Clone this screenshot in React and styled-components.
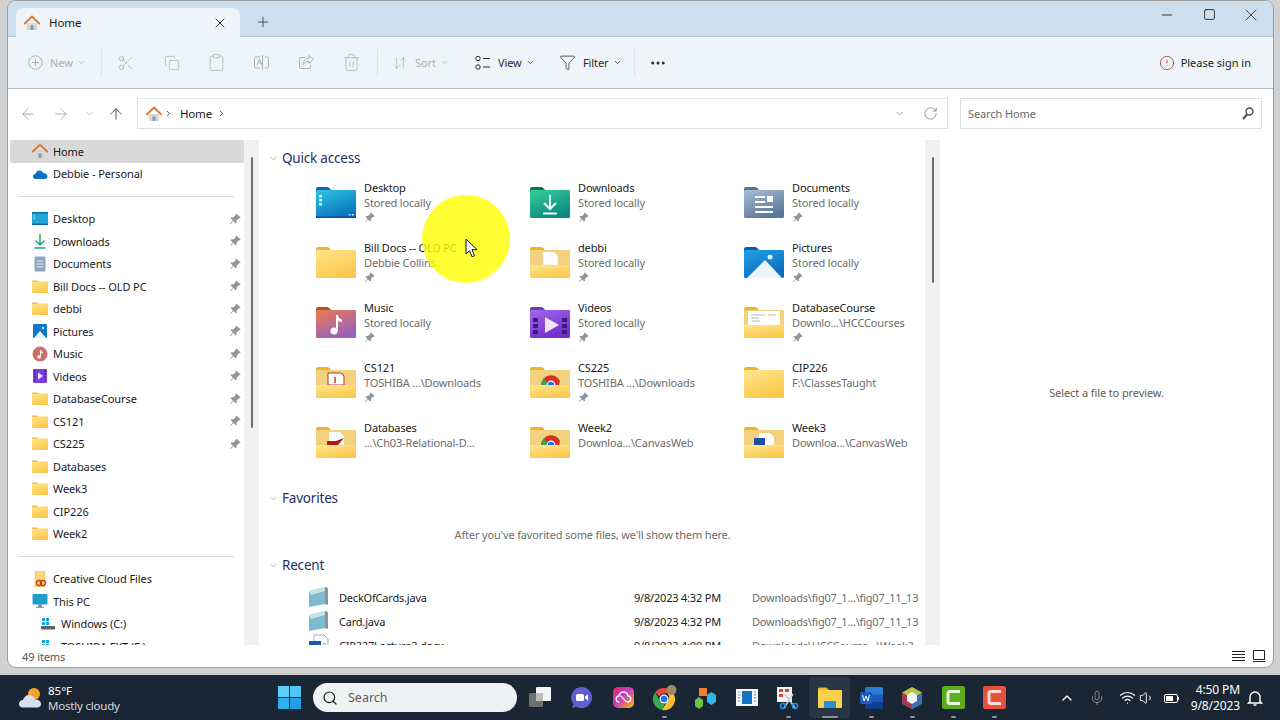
import React, { useId } from 'react';
import styled, { createGlobalStyle } from 'styled-components';
import {
  ArrowDownUp, ArrowLeft, ArrowRight, ArrowUp, ChevronDown, ChevronRight, ChevronUp, CircleAlert, Clipboard,
  Copy, Funnel, Mic, Minus, MoreHorizontal, Plus, RotateCw, Scissors, Search, Square, Trash2,
  Volume1, Wifi, X,
} from 'lucide-react';
import { BsPinAngleFill } from 'react-icons/bs';

const GlobalStyle = createGlobalStyle`
  html, body { margin: 0; padding: 0; width: 1280px; height: 720px; overflow: hidden; }
  body { font-family: "Noto Sans", "Open Sans", sans-serif; background: #d4d5d6; }
  * { box-sizing: border-box; }
`;

const Desktop = styled.div`
  position: relative;
  width: 1280px;
  height: 720px;
  display: flex;
  flex-direction: column;
  overflow: hidden;
`;
const WindowArea = styled.div`
  height: 675px;
  padding: 1px 7px 8px 8px;
  background: #d0d1d2;
`;
const Win = styled.div`
  height: 666px;
  display: flex;
  flex-direction: column;
  background: #fff;
  border-radius: 8px;
  overflow: hidden;
  box-shadow: 0 0 0 1px #9a9da0;
`;
const TitleBar = styled.div`
  height: 36px;
  flex: none;
  display: flex;
  align-items: flex-end;
  padding-left: 8px;
  background: #cddeed;
  border-bottom: 1px solid #b9c9d8;
`;
const Tab = styled.div`
  width: 224px;
  height: 29px;
  margin-bottom: -1px;
  display: flex;
  align-items: center;
  padding: 0 12px 0 8px;
  background: #eff4f9;
  border-radius: 8px 8px 0 0;
  font-size: 11.5px;
  letter-spacing: -0.1px;
  color: #1a1a1a;
  span { margin-left: 9px; flex: 1; }
`;
const NewTab = styled.div`
  width: 46px;
  height: 28px;
  display: flex;
  align-items: center;
  justify-content: center;
  color: #333;
`;
const Caption = styled.div`
  margin-left: auto;
  margin-right: 1px;
  align-self: flex-start;
  display: flex;
`;
const CaptionBtn = styled.div`
  width: 42px;
  height: 27px;
  display: flex;
  align-items: center;
  justify-content: center;
  color: #222;
`;
const Toolbar = styled.div`
  height: 52px;
  flex: none;
  display: flex;
  align-items: center;
  padding-left: 10px;
  background: #eff4f9;
  border-bottom: 1px solid #b7bec5;
`;
const ToolItem = styled.div`
  width: ${p => p.$w}px;
  padding-left: ${p => p.$pl || 0}px;
  height: 32px;
  flex: none;
  display: flex;
  align-items: center;
  justify-content: ${p => p.$center ? 'center' : 'flex-start'};
  color: ${p => p.$off ? '#a9afb5' : '#2a2a2a'};
  font-size: 11px;
  letter-spacing: -0.1px;
  span { margin: 0 4px 0 7px; }
`;
const ToolDivider = styled.div`
  width: 1px;
  height: 28px;
  flex: none;
  background: #dfe4e9;
`;
const SignIn = styled.div`
  margin-left: auto;
  margin-right: 22px;
  display: flex;
  align-items: center;
  gap: 6px;
  font-size: 11px;
  color: #222;
`;
const AddressRow = styled.div`
  height: 51px;
  flex: none;
  display: flex;
  align-items: flex-start;
  padding: 9px 11px 0 0;
`;
const NavBtns = styled.div`
  width: 129px;
  height: 31px;
  flex: none;
  display: flex;
  align-items: center;
`;
const NavBtn = styled.div`
  width: ${p => p.$w}px;
  display: flex;
  justify-content: center;
  color: ${p => p.$off ? '#8e949a' : '#333'};
`;
const AddressBox = styled.div`
  width: 811px;
  height: 31px;
  display: flex;
  align-items: center;
  padding: 0 9px 0 8px;
  border: 1px solid #dcdedf;
  border-top-color: #e4e5e6;
  font-size: 11.5px;
  color: #1a1a1a;
  span { margin: 0 5px 0 7px; letter-spacing: -0.2px; }
  > svg:nth-of-type(2) { margin-left: 2px; }
`;
const AddressEnd = styled.div`
  margin-left: auto;
  display: flex;
  align-items: center;
  gap: 18px;
  color: #666;
`;
const SearchBox = styled.div`
  width: 302px;
  height: 31px;
  margin-left: 12px;
  display: flex;
  align-items: center;
  justify-content: space-between;
  padding: 0 7px;
  border: 1px solid #dcdedf;
  font-size: 11px;
  letter-spacing: -0.1px;
  color: #6a6a6a;
`;
const Body = styled.div`
  flex: 1;
  min-height: 0;
  display: flex;
`;
const Sidebar = styled.div`
  width: 236px;
  flex: none;
  overflow: hidden;
`;
const NavRow = styled.div`
  height: 22.5px;
  margin-left: 2px;
  display: flex;
  align-items: center;
  padding-left: ${p => p.$indent ? 30 : 22}px;
  padding-right: 3px;
  border-radius: 2px;
  background: ${p => p.$active ? '#d9d9d9' : 'transparent'};
  font-size: 11px;
  letter-spacing: -0.1px;
  color: #1a1a1a;
  white-space: nowrap;
  span { margin-left: 5px; flex: 1; }
  > svg { color: #8f959b; }
`;
const IconSlot = styled.div`
  width: 16px;
  height: 16px;
  flex: none;
  display: flex;
  align-items: center;
  justify-content: center;
`;
const NavDivider = styled.div`
  height: 22.5px;
  margin: 0 9px 0 10px;
  display: flex;
  align-items: center;
  &::after { content: ""; width: 100%; height: 1px; background: #d8d8d8; }
`;
const Track = styled.div`
  width: ${p => p.$w}px;
  flex: none;
  display: flex;
  justify-content: center;
  padding-top: 17px;
  background: #f1f1f1;
  &::after {
    content: "";
    width: 2px;
    height: ${p => p.$thumb}px;
    background: #6e6e6e;
    border-radius: 1px;
  }
`;
const Content = styled.div`
  width: ${p => p.$w}px;
  flex: none;
  padding: 8px 8px 0 8px;
  overflow: hidden;
  margin-left: 1px;
`;
const SectionHead = styled.div`
  height: 20px;
  display: flex;
  align-items: center;
  gap: 3px;
  font-size: 13.5px;
  letter-spacing: -0.2px;
  color: #1d2f66;
  svg { color: #777; }
`;
const TileGrid = styled.div`
  display: grid;
  grid-template-columns: repeat(3, 214px);
  grid-auto-rows: 60px;
  margin: 10px 0 10px 48px;
`;
const Tile = styled.div`
  display: flex;
  gap: 8px;
  padding-top: 2px;
`;
const TileIcon = styled.div`
  width: 40px;
  padding-top: 6px;
  flex: none;
`;
const TileText = styled.div`
  font-size: 11px;
  line-height: 15px;
  letter-spacing: -0.15px;
  white-space: nowrap;
  color: #1a1a1a;
  small { display: block; font-size: 11px; color: #6c6c6c; }
  svg { color: #8f959b; display: block; margin-top: 2px; }
`;
const EmptyNote = styled.div`
  height: 47px;
  display: flex;
  align-items: center;
  justify-content: center;
  padding-top: 5px;
  font-size: 11px;
  letter-spacing: -0.15px;
  color: #6c6c6c;
`;
const RecentList = styled.div`
  margin-top: 10px;
`;
const RecentRow = styled.div`
  height: 24px;
  display: flex;
  align-items: center;
  padding-left: 40px;
  font-size: 11px;
  letter-spacing: -0.2px;
  color: #1a1a1a;
  white-space: nowrap;
  svg { flex: none; }
`;
const RecentName = styled.div`
  width: 295px;
  flex: none;
  margin-left: 9px;
`;
const RecentDate = styled.div`
  width: 118px;
  flex: none;
`;
const RecentPath = styled.div`
  color: #6c6c6c;
`;
const Preview = styled.div`
  flex: 1;
  display: flex;
  align-items: center;
  justify-content: center;
  font-size: 11px;
  letter-spacing: -0.1px;
  color: #5c5c5c;
`;
const StatusBar = styled.div`
  height: 22px;
  flex: none;
  display: flex;
  align-items: center;
  justify-content: space-between;
  padding: 0 8px 0 14px;
  font-size: 11px;
  letter-spacing: -0.1px;
  color: #555;
`;
const ViewToggles = styled.div`
  display: flex;
  gap: 8px;
  color: #222;
`;
const Taskbar = styled.div`
  height: 45px;
  flex: none;
  display: flex;
  align-items: center;
  background: #1a2634;
  color: #fff;
`;
const Weather = styled.div`
  width: 268px;
  flex: none;
  display: flex;
  align-items: center;
  gap: 6px;
  padding-left: 18px;
  font-size: 11.5px;
  line-height: 15px;
  small { display: block; font-size: 11.5px; color: #d5dade; letter-spacing: -0.2px; }
`;
const StartBtn = styled.div`
  width: 45px;
  flex: none;
  padding-left: 10px;
  display: flex;
`;
const SearchPill = styled.div`
  width: 204px;
  height: 29px;
  flex: none;
  display: flex;
  align-items: center;
  gap: 10px;
  padding-left: 9px;
  border-radius: 15px;
  background: #eef2f2;
  color: #5e5e5e;
  font-size: 12.500px;
  svg { color: #1a1a1a; }
`;
const Apps = styled.div`
  margin-left: 3px;
  display: flex;
`;
const AppSlot = styled.div`
  position: relative;
  width: 41.3px;
  height: 41px;
  display: flex;
  align-items: center;
  justify-content: center;
  border-radius: 4px;
  background: ${p => p.$active ? '#2a3644' : 'transparent'};
  &::after {
    content: "";
    display: ${p => p.$running ? 'block' : 'none'};
    position: absolute;
    bottom: 0;
    left: 50%;
    width: ${p => p.$active ? 16 : 5}px;
    height: 2px;
    margin-left: ${p => p.$active ? -8 : -2.5}px;
    border-radius: 1px;
    background: #8b949e;
  }
`;
const Tray = styled.div`
  margin-left: auto;
  display: flex;
  align-items: center;
  padding-right: 16px;
`;
const TraySlot = styled.div`
  width: ${p => p.$w}px;
  display: flex;
  justify-content: center;
  color: ${p => p.$dim ? '#8f969d' : '#fff'};
`;
const Clock = styled.div`
  width: 53px;
  margin: 0 6px 0 0;
  text-align: right;
  font-size: 12px;
  line-height: 15.5px;
  letter-spacing: -0.1px;
  white-space: nowrap;
`;
const Highlight = styled.div`
  position: absolute;
  left: 422px;
  top: 195px;
  width: 88px;
  height: 88px;
  border-radius: 50%;
  background: rgba(255, 255, 0, 0.8);
  filter: blur(0.5px);
`;
const Pointer = styled.svg`
  position: absolute;
  left: 465px;
  top: 238px;
`;

const folderColors = {
  desktop: ['#0f67b5', '#2ec6e0', '#0a76c0'],
  downloads: ['#0a7458', '#35cf9c', '#0f8a80'],
  documents: ['#5f7389', '#a6bcd6', '#5d7998'],
  pictures: ['#0a5cad', '#20a0e4', '#0f6cc0'],
  music: ['#b4560f', '#ea7a4c', '#9b62bb'],
  videos: ['#6b3eb6', '#a565ea', '#7231c9'],
  yellow: ['#eeb32a', '#ffe68f', '#fbc84c'],
};

function Thumb({ kind }) {
  if (kind === 'doc') return <path d="M13 6h11l4 4v9H13z" fill="#fff" stroke="#ddd" strokeWidth=".5" />;
  if (kind === 'pdf') return (
    <g>
      <path d="M12 7h12a4 4 0 0 1 4 4v8H12z" fill="#fff" stroke="#b33" strokeWidth="1" />
      <path d="M19 11v6" stroke="#c33" strokeWidth="1.5" />
    </g>
  );
  if (kind === 'db') return (
    <g>
      <path d="M13 6h11l4 4v9H13z" fill="#fff" />
      <path d="M11 15h9l8-3-6 7H11z" fill="#a81d1d" />
    </g>
  );
  if (kind === 'chrome') return (
    <g>
      <path d="M11 19a10 10 0 0 1 19-4l-1 4z" fill="#d93025" />
      <path d="M11 19a10 10 0 0 1 3-7l4 7z" fill="#34a853" />
      <circle cx="21" cy="19" r="4.4" fill="#fff" />
      <circle cx="21" cy="19" r="3.2" fill="#1a73e8" />
    </g>
  );
  if (kind === 'word') return (
    <g>
      <path d="M15 7h11l4 4v8H15z" fill="#fff" />
      <rect x="10" y="12" width="11" height="7" fill="#1b4ea8" />
    </g>
  );
  if (kind === 'note') return (
    <g>
      <rect x="4" y="5" width="32" height="14" fill="#fff" />
      <path d="M7 9h14M7 12h8M24 9h8M8 15h8" stroke="#b8b8b8" />
    </g>
  );
  return null;
}

function Folder({ kind = 'yellow', thumb, w = 40, h = 32 }) {
  const id = useId();
  const [tab, top, bottom] = folderColors[kind];
  return (
    <svg width={w} height={h} viewBox="0 0 40 32">
      <defs>
        <linearGradient id={id} x1="0" y1="0" x2="0.5" y2="1">
          <stop offset="0" stopColor={top} />
          <stop offset="1" stopColor={bottom} />
        </linearGradient>
      </defs>
      <path d="M0 3a2 2 0 0 1 2-2h9c1.5 0 2.500 1 4 3h23a2 2 0 0 1 2 2v8H0z" fill={tab} />
      {thumb ? (
        <g>
          <rect x="0" y="4" width="40" height="28" rx="1.500" fill="#f2d27f" />
          <Thumb kind={thumb} />
          <path d="M0 19h40v11.500a1.500 1.500 0 0 1-1.500 1.500h-37a1.500 1.500 0 0 1-1.500-1.500z" fill={`url(#${id})`} />
        </g>
      ) : (
        <rect x="0" y="4" width="40" height="28" rx="1.500" fill={`url(#${id})`} />
      )}
      {kind === 'desktop' && (
        <g fill="#d6f1fa">
          <rect x="3" y="9" width="3" height="2.500" />
          <rect x="3" y="13" width="3" height="2.500" />
          <rect x="3" y="17" width="3" height="2.500" />
          <rect x="33" y="28" width="1.500" height="1.500" />
          <rect x="36" y="28" width="1.500" height="1.500" />
          <rect x="0" y="30.500" width="40" height="1.500" fill="#0a4f94" />
        </g>
      )}
      {kind === 'downloads' && (
        <g stroke="#e6fff6" strokeWidth="2" fill="none">
          <path d="M20 9v14M14 17l6 6 6-6" />
          <path d="M13 27.500h14" />
        </g>
      )}
      {kind === 'documents' && (
        <g fill="#fff">
          <rect x="11" y="10" width="10" height="2" />
          <rect x="11" y="15" width="10" height="2" />
          <rect x="23" y="10" width="6" height="6" />
          <rect x="11" y="20" width="18" height="2" />
          <rect x="11" y="25" width="18" height="2" />
        </g>
      )}
      {kind === 'pictures' && (
        <g>
          <circle cx="26" cy="11" r="2.500" fill="#d5f1fb" />
          <path d="M3 32 21 14 38 32z" fill="#eaf6fb" />
        </g>
      )}
      {kind === 'music' && (
        <g fill="#fff">
          <circle cx="18" cy="25" r="3.500" />
          <path d="M20 25V9h2c.5 3 2 4 4 4.500V16c-1.500 0-3-.5-4-1.500V25z" />
        </g>
      )}
      {kind === 'videos' && (
        <g>
          <path d="M15 11l14 8-14 8z" fill="#eee6fb" />
          <g fill="#3b1a82">
            <rect x="3" y="12" width="5" height="4" />
            <rect x="3" y="18" width="5" height="4" />
            <rect x="3" y="24" width="5" height="4" />
            <rect x="32" y="12" width="5" height="4" />
            <rect x="32" y="18" width="5" height="4" />
            <rect x="32" y="24" width="5" height="4" />
          </g>
        </g>
      )}
    </svg>
  );
}

function HomeIcon({ size = 16 }) {
  return (
    <svg width={size} height={size} viewBox="0 0 16 16">
      <path d="M3 8h10v7H3z" fill="#d6d9db" />
      <rect x="6.500" y="10.500" width="3" height="4.500" fill="#94979a" />
      <path d="M.8 8.500 8 1.500l7.200 7" fill="none" stroke="#d9772b" strokeWidth="1.800" strokeLinecap="round" />
    </svg>
  );
}

function RenameIcon() {
  return (
    <svg width="17" height="17" viewBox="0 0 17 17" fill="none" stroke="currentColor">
      <path d="M7 3H3a1.500 1.500 0 0 0-1.500 1.500v8A1.500 1.500 0 0 0 3 14h4M12 3h2a1.500 1.500 0 0 1 1.500 1.500v8A1.500 1.500 0 0 1 14 14h-2M9.500 1v15" />
      <path d="M4 11l2.500-6L9 11M5 9h3" />
    </svg>
  );
}

function ShareIcon() {
  return (
    <svg width="17" height="17" viewBox="0 0 17 17" fill="none" stroke="currentColor">
      <path d="M7 3.500H3A1.500 1.500 0 0 0 1.500 5v8A1.500 1.500 0 0 0 3 14.500h8a1.500 1.500 0 0 0 1.500-1.500v-2" />
      <path d="M11 1.500l4.500 4-4.500 4V7.300C8 7.300 6 8.500 5 11c0-4 2.500-6.500 6-6.800z" />
    </svg>
  );
}

function ViewIcon() {
  return (
    <svg width="16" height="16" viewBox="0 0 16 16" fill="none" stroke="currentColor">
      <circle cx="3" cy="3.500" r="2.200" />
      <circle cx="3" cy="12" r="2.200" />
      <path d="M8 3.500h7M8 12h7" />
    </svg>
  );
}

function SearchHandle() {
  return (
    <svg width="12" height="13" viewBox="0 0 12 13" fill="none" stroke="#4a4a4a" strokeWidth="1.400">
      <circle cx="7.500" cy="4.500" r="3.500" />
      <path d="M5 7.500 1 12" strokeWidth="1.900" />
    </svg>
  );
}

function DesktopGlyph() {
  return (
    <svg width="16" height="13" viewBox="0 0 16 13">
      <rect width="16" height="13" rx="1" fill="#1fa8d8" />
      <rect width="16" height="1.600" rx=".6" fill="#0f6ab4" />
      <rect y="11.600" width="16" height="1.400" fill="#0c5ea8" />
      <path d="M1.500 4h1.500M1.500 6.500h1.500" stroke="#d6f1fa" />
    </svg>
  );
}

function PicturesGlyph() {
  return (
    <svg width="14" height="14" viewBox="0 0 14 14">
      <rect width="14" height="14" rx="1" fill="#0f78cc" />
      <circle cx="10" cy="4" r="1.200" fill="#d5f1fb" />
      <path d="M1 14 7 7l6 7z" fill="#f1f8fb" />
    </svg>
  );
}

function VideosGlyph() {
  return (
    <svg width="14" height="14" viewBox="0 0 14 14">
      <rect width="14" height="14" rx="1" fill="#7a3be0" />
      <path d="M5 3.500l5 3.500-5 3.500z" fill="#f0e8ff" />
      <path d="M1 2h1.500M1 5h1.500M1 8h1.500M1 11h1.500M11.500 2H13M11.500 5H13M11.500 8H13M11.500 11H13" stroke="#2f1472" strokeWidth="1.200" />
    </svg>
  );
}

function DownloadGlyph() {
  return (
    <svg width="16" height="16" viewBox="0 0 16 16" fill="none" stroke="#18a57e" strokeWidth="1.500">
      <path d="M8 1v10.500M3.500 7.500 8 12l4.500-4.500M2.500 15h11" />
    </svg>
  );
}

function DocGlyph() {
  return (
    <svg width="16" height="16" viewBox="0 0 16 16">
      <rect x="2.500" y="0.500" width="11" height="15" rx="1" fill="#8da4bf" />
      <path d="M4.500 5h7M4.500 8h7M4.500 11h7" stroke="#e8eef5" strokeWidth="1.200" />
    </svg>
  );
}

function MusicGlyph() {
  return (
    <svg width="16" height="16" viewBox="0 0 16 16">
      <circle cx="8" cy="8" r="7.500" fill="#cf6d68" />
      <circle cx="7" cy="11" r="1.700" fill="#fff" />
      <path d="M8 11V4h1c.3 1 1 1.700 2 2v1.300C10 7 9.500 6.800 9 6.400V11z" fill="#fff" />
    </svg>
  );
}

function CloudGlyph() {
  return (
    <svg width="16" height="16" viewBox="0 0 16 16">
      <path d="M1 10.500C1 9 2 8 3.500 8 4 5.500 6 4.500 7.500 4.500c2 0 3 1 3.700 2.500 2.500 0 4.300 1.300 4.300 3.300 0 1.500-1 2.700-2.500 2.700H3C2 13 1 12 1 10.500z" fill="#0f6fc4" />
    </svg>
  );
}

function CcFileGlyph() {
  return (
    <svg width="16" height="16" viewBox="0 0 16 16">
      <path d="M3 0h10v16H3z" fill="#f8d878" stroke="#e0b84c" strokeWidth=".5" />
      <circle cx="7" cy="12" r="2.500" fill="none" stroke="#d8381c" strokeWidth="1.300" />
      <circle cx="11" cy="12" r="2.500" fill="none" stroke="#d8381c" strokeWidth="1.300" />
    </svg>
  );
}

function PcGlyph() {
  return (
    <svg width="16" height="16" viewBox="0 0 16 16">
      <rect x="0.500" y="1" width="15" height="10.500" rx="1" fill="#1f9ec9" />
      <path d="M6 11.500h4V14H6z" fill="#7d98a8" />
      <path d="M4 14.500h8" stroke="#7d98a8" />
    </svg>
  );
}

function DriveGlyph() {
  return (
    <svg width="16" height="16" viewBox="0 0 16 16">
      <rect x="2" y="2" width="3" height="3" fill="#1aa0d8" />
      <rect x="6" y="2" width="3" height="3" fill="#1aa0d8" />
      <rect x="2" y="6" width="3" height="3" fill="#1aa0d8" />
      <rect x="6" y="6" width="3" height="3" fill="#1aa0d8" />
      <rect x="1" y="10" width="14" height="3.500" fill="#5e6468" />
    </svg>
  );
}

function JavaFile() {
  return (
    <svg width="22" height="22" viewBox="0 0 22 22">
      <path d="M1 5 17 1v17L1 21z" fill="#7fb8cf" />
      <path d="M1 5 17 1v4L3 9z" fill="#c8e2ea" />
      <path d="M17 1l3 1v17l-3-1z" fill="#8d9499" />
    </svg>
  );
}

function WordFile() {
  return (
    <svg width="22" height="22" viewBox="0 0 22 22">
      <path d="M6 1h10l4 4v16H6z" fill="#fff" stroke="#a9a9a9" />
      <rect x="1" y="7" width="12" height="12" fill="#1b57b0" />
      <path d="M15 10h3M15 13h3M15 16h3" stroke="#7a9cd0" />
    </svg>
  );
}

function WinLogo() {
  return (
    <svg width="23" height="23" viewBox="0 0 23 23">
      <rect x="0" y="0" width="11" height="11" fill="#5bd0f7" />
      <rect x="12" y="0" width="11" height="11" fill="#4cc6f4" />
      <rect x="0" y="12" width="11" height="11" fill="#2fb0ee" />
      <rect x="12" y="12" width="11" height="11" fill="#219fe6" />
    </svg>
  );
}

function WeatherIcon() {
  return (
    <svg width="24" height="22" viewBox="0 0 24 22">
      <circle cx="16" cy="7" r="6" fill="#f4a52d" />
      <path d="M1 17c0-2.500 2-4 4-4 1-3 3-5 6-5 3 0 5 2 6 4.500 3.500 0 6 1.500 6 4.500 0 2-1.500 3.500-3.500 3.500H4.500C2.500 20.500 1 19 1 17z" fill="#d6e1ef" />
    </svg>
  );
}

const app = {
  tasks: (
    <svg width="23" height="21" viewBox="0 0 23 21">
      <rect x="7" y="0" width="15" height="14" rx="1" fill="#f4f4f4" />
      <rect x="0" y="6" width="14" height="14" rx="1" fill="#6e7072" />
      <rect x="7" y="6" width="7" height="8" fill="#bcbcbc" />
    </svg>
  ),
  chat: (
    <svg width="23" height="23" viewBox="0 0 23 23">
      <path d="M11.500 1a10.500 10.500 0 1 1-5 19.700L2 22l1.500-4A10.500 10.500 0 0 1 11.500 1z" fill="#5f5fcf" />
      <rect x="6" y="8" width="8" height="7" rx="1.500" fill="#fff" />
      <path d="M15 10.500l3-2v6l-3-2z" fill="#fff" />
    </svg>
  ),
  cloud: (
    <svg width="21" height="21" viewBox="0 0 21 21">
      <defs>
        <linearGradient id="cc-grad" x1="0" y1="0" x2="1" y2="1">
          <stop offset="0" stopColor="#f0245c" />
          <stop offset=".45" stopColor="#c23cc8" />
          <stop offset=".8" stopColor="#f08a3c" />
          <stop offset="1" stopColor="#c8e03c" />
        </linearGradient>
      </defs>
      <rect width="21" height="21" rx="5" fill="url(#cc-grad)" />
      <path d="M6.500 15a3 3 0 0 1-.5-6c.5-2.500 2.500-4 4.500-4s4 1.500 4.500 4a3 3 0 0 1-.5 6c-2.500 0-5.500-6-7-6" fill="none" stroke="#fff" strokeWidth="1.300" />
    </svg>
  ),
  chrome: (
    <svg width="24" height="26" viewBox="0 0 24 26">
      <path d="M11 3a11 11 0 0 1 9.500 5.500H11a5 5 0 0 0-4.500 3L2 7.500A11 11 0 0 1 11 3z" fill="#e8453c" />
      <path d="M2 7.500 6.500 15a5 5 0 0 0 5.500 3.800L9 24.900A11 11 0 0 1 2 7.500z" fill="#34a853" />
      <path d="M20.500 8.500A11 11 0 0 1 9 24.900l5.500-9a5 5 0 0 0 0-7.400z" fill="#fbc02d" />
      <circle cx="11" cy="14" r="4.500" fill="#fff" />
      <circle cx="11" cy="14" r="3.300" fill="#1a73e8" />
      <circle cx="18.500" cy="5" r="5" fill="#9b8a64" />
    </svg>
  ),
  cubes: (
    <svg width="21" height="22" viewBox="0 0 21 22">
      <path d="M4 1h8v8H4z" fill="#ee7d31" />
      <path d="M0 13l4-3 4 3v6l-4 3-4-3z" fill="#6cc24a" />
      <path d="M12 8l4.500-3L21 8v7l-4.500 3L12 15z" fill="#35b6e6" />
    </svg>
  ),
  film: (
    <svg width="22" height="17" viewBox="0 0 22 17">
      <rect width="22" height="17" fill="#f2f4f5" />
      <rect x="6" y="2" width="10" height="13" fill="#1574c4" />
      <path d="M2 3h2M2 6h2M2 9h2M2 12h2M18 3h2M18 6h2M18 9h2M18 12h2" stroke="#7d8b96" />
    </svg>
  ),
  snip: (
    <svg width="24" height="24" viewBox="0 0 24 24">
      <rect x="1" y="1" width="15" height="15" fill="#f5f2ef" />
      <path d="M3 3h4v3H3zM9 3h4v3H9zM3 8h4v3H3z" fill="#d8473c" />
      <path d="M9 8l10 14M17 8 8 22" stroke="#c6d0d8" strokeWidth="1.500" />
      <circle cx="7" cy="20" r="2.500" fill="none" stroke="#2b8ee0" strokeWidth="1.500" />
      <circle cx="19" cy="20" r="2.500" fill="none" stroke="#2b8ee0" strokeWidth="1.500" />
    </svg>
  ),
  explorer: (
    <svg width="24" height="21" viewBox="0 0 24 21">
      <path d="M0 2a1.500 1.500 0 0 1 1.500-1.500h7L11 3h13v5H0z" fill="#f2ba2d" />
      <rect x="0" y="3" width="24" height="18" rx="1" fill="#fbd14d" />
      <rect x="6" y="14" width="12" height="7" fill="#2a8fd8" />
    </svg>
  ),
  word: (
    <svg width="23" height="22" viewBox="0 0 23 22">
      <rect x="5" y="0" width="18" height="22" rx="1.500" fill="#2b7cd3" />
      <rect x="5" y="15" width="18" height="7" fill="#103f91" />
      <rect x="5" y="7.500" width="18" height="7.500" fill="#185abd" />
      <rect x="0" y="5" width="12" height="12" rx="1.500" fill="#1a5cb8" />
      <path d="M2.500 8l1.500 6 2-5 2 5 1.500-6" fill="none" stroke="#fff" />
    </svg>
  ),
  beans: (
    <svg width="20" height="22" viewBox="0 0 20 22">
      <path d="M10 0l10 5.500v11L10 22 0 16.500v-11z" fill="#b7c94c" />
      <path d="M0 5.500 10 11v11L0 16.500z" fill="#a13a56" />
      <path d="M20 5.500 10 11v11l10-5.500z" fill="#3b6fb0" />
      <path d="M10 5l5 3v6l-5 3-5-3V8z" fill="#f4f4f4" />
    </svg>
  ),
  camGreen: (
    <svg width="23" height="23" viewBox="0 0 23 23">
      <rect width="23" height="23" rx="2.500" fill="#5dab1e" />
      <path d="M18 5.500H8a2 2 0 0 0-2 2v8a2 2 0 0 0 2 2h10" fill="none" stroke="#e9f7dc" strokeWidth="3" />
    </svg>
  ),
  camRed: (
    <svg width="23" height="23" viewBox="0 0 23 23">
      <rect width="23" height="23" rx="2.500" fill="#e8503c" />
      <path d="M18 5.500H8a2 2 0 0 0-2 2v8a2 2 0 0 0 2 2h10" fill="none" stroke="#fbdcd6" strokeWidth="3" />
    </svg>
  ),
};

const pin = <BsPinAngleFill size={12} />;
const yellowNav = <Folder w={16} h={13} />;

const navTop = [
  ['Desktop', <DesktopGlyph />],
  ['Downloads', <DownloadGlyph />],
  ['Documents', <DocGlyph />],
  ['Bill Docs -- OLD PC', yellowNav],
  ['debbi', yellowNav],
  ['Pictures', <PicturesGlyph />],
  ['Music', <MusicGlyph />],
  ['Videos', <VideosGlyph />],
  ['DatabaseCourse', yellowNav],
  ['CS121', yellowNav],
  ['CS225', yellowNav],
];
const navPlain = ['Databases', 'Week3', 'CIP226', 'Week2'];

const tiles = [
  ['Desktop', 'Stored locally', 'desktop', null, true],
  ['Downloads', 'Stored locally', 'downloads', null, true],
  ['Documents', 'Stored locally', 'documents', null, true],
  ['Bill Docs -- OLD PC', 'Debbie Collins', 'yellow', null, true],
  ['debbi', 'Stored locally', 'yellow', 'doc', true],
  ['Pictures', 'Stored locally', 'pictures', null, true],
  ['Music', 'Stored locally', 'music', null, true],
  ['Videos', 'Stored locally', 'videos', null, true],
  ['DatabaseCourse', 'Downlo...\\HCCCourses', 'yellow', 'note', true],
  ['CS121', 'TOSHIBA ...\\Downloads', 'yellow', 'pdf', true],
  ['CS225', 'TOSHIBA ...\\Downloads', 'yellow', 'chrome', true],
  ['CIP226', 'F:\\ClassesTaught', 'yellow', null, false],
  ['Databases', '...\\Ch03-Relational-D...', 'yellow', 'db', false],
  ['Week2', 'Downloa...\\CanvasWeb', 'yellow', 'chrome', false],
  ['Week3', 'Downloa...\\CanvasWeb', 'yellow', 'word', false],
];

const recent = [
  ['DeckOfCards.java', '9/8/2023 4:32 PM', 'Downloads\\fig07_1...\\fig07_11_13', <JavaFile />],
  ['Card.java', '9/8/2023 4:32 PM', 'Downloads\\fig07_1...\\fig07_11_13', <JavaFile />],
  ['CIP227Lecture3.docx', '9/8/2023 4:09 PM', 'Downloads\\HCCCourse...\\Week2', <WordFile />],
];

const taskApps = [
  ['tasks'], ['chat'], ['cloud'], ['chrome', true], ['cubes'], ['film'],
  ['snip', true], ['explorer', true, true], ['word', true], ['beans', true], ['camGreen', true], ['camRed', true],
];

export default function App() {
  return (
    <Desktop>
      <GlobalStyle />
      <WindowArea>
        <Win>
          <TitleBar>
            <Tab>
              <HomeIcon />
              <span>Home</span>
              <X size={16} strokeWidth={1.3} />
            </Tab>
            <NewTab><Plus size={16} strokeWidth={1.2} /></NewTab>
            <Caption>
              <CaptionBtn><Minus size={16} strokeWidth={1.3} /></CaptionBtn>
              <CaptionBtn><Square size={13} strokeWidth={1.6} /></CaptionBtn>
              <CaptionBtn><X size={20} strokeWidth={1} /></CaptionBtn>
            </Caption>
          </TitleBar>
          <Toolbar>
            <ToolItem $w={83} $pl={10} $off>
              <svg width="15" height="15" viewBox="0 0 15 15" fill="none" stroke="currentColor">
                <circle cx="7.500" cy="7.500" r="6.700" />
                <path d="M7.500 4v7M4 7.500h7" />
              </svg>
              <span>New</span>
              <ChevronDown size={9} />
            </ToolItem>
            <ToolDivider />
            <ToolItem $w={47} $center $off><Scissors size={18} strokeWidth={1} /></ToolItem>
            <ToolItem $w={45} $center $off><Copy size={16} strokeWidth={1.1} /></ToolItem>
            <ToolItem $w={45} $center $off><Clipboard size={19} strokeWidth={1} /></ToolItem>
            <ToolItem $w={45} $center $off><RenameIcon /></ToolItem>
            <ToolItem $w={45} $center $off><ShareIcon /></ToolItem>
            <ToolItem $w={45} $center $off><Trash2 size={19} strokeWidth={1} /></ToolItem>
            <ToolItem $w={3} />
            <ToolDivider />
            <ToolItem $w={90} $pl={14} $off>
              <ArrowDownUp size={16} strokeWidth={1.1} />
              <span>Sort</span>
              <ChevronDown size={9} />
            </ToolItem>
            <ToolItem $w={85} $pl={7}>
              <ViewIcon />
              <span>View</span>
              <ChevronDown size={9} />
            </ToolItem>
            <ToolItem $w={81} $pl={6}>
              <Funnel size={17} strokeWidth={1.05} />
              <span>Filter</span>
              <ChevronDown size={9} />
            </ToolItem>
            <ToolDivider />
            <ToolItem $w={45} $center><MoreHorizontal size={18} strokeWidth={2} /></ToolItem>
            <SignIn>
              <CircleAlert size={16} strokeWidth={1.2} color="#a83232" />
              Please sign in
            </SignIn>
          </Toolbar>
          <AddressRow>
            <NavBtns>
              <NavBtn $w={40} $off><ArrowLeft size={18} strokeWidth={1} /></NavBtn>
              <NavBtn $w={26} $off><ArrowRight size={18} strokeWidth={1} /></NavBtn>
              <NavBtn $w={30} $off><ChevronDown size={11} strokeWidth={1.2} /></NavBtn>
              <NavBtn $w={24}><ArrowUp size={18} strokeWidth={1.1} /></NavBtn>
            </NavBtns>
            <AddressBox>
              <HomeIcon />
              <ChevronRight size={9} />
              <span>Home</span>
              <ChevronRight size={9} />
              <AddressEnd>
                <ChevronDown size={11} strokeWidth={1.3} />
                <RotateCw size={15} strokeWidth={1.1} />
              </AddressEnd>
            </AddressBox>
            <SearchBox>
              Search Home
              <SearchHandle />
            </SearchBox>
          </AddressRow>
          <Body>
            <Sidebar>
              <NavRow $active><IconSlot><HomeIcon /></IconSlot><span>Home</span></NavRow>
              <NavRow><IconSlot><CloudGlyph /></IconSlot><span>Debbie - Personal</span></NavRow>
              <NavDivider />
              {navTop.map(([name, icon]) => (
                <NavRow key={name}><IconSlot>{icon}</IconSlot><span>{name}</span>{pin}</NavRow>
              ))}
              {navPlain.map(name => (
                <NavRow key={name}><IconSlot>{yellowNav}</IconSlot><span>{name}</span></NavRow>
              ))}
              <NavDivider />
              <NavRow><IconSlot><CcFileGlyph /></IconSlot><span>Creative Cloud Files</span></NavRow>
              <NavRow><IconSlot><PcGlyph /></IconSlot><span>This PC</span></NavRow>
              <NavRow $indent><IconSlot><DriveGlyph /></IconSlot><span>Windows (C:)</span></NavRow>
              <NavRow $indent><IconSlot><DriveGlyph /></IconSlot><span>TOSHIBA EXT (F:)</span></NavRow>
            </Sidebar>
            <Track $w={15} $thumb={271} />
            <Content $w={665}>
              <SectionHead><ChevronDown size={11} strokeWidth={1.2} />Quick access</SectionHead>
              <TileGrid>
                {tiles.map(([name, sub, kind, thumb, pinned]) => (
                  <Tile key={name}>
                    <TileIcon><Folder kind={kind} thumb={thumb} /></TileIcon>
                    <TileText>
                      {name}
                      <small>{sub}</small>
                      {pinned && <BsPinAngleFill size={11} />}
                    </TileText>
                  </Tile>
                ))}
              </TileGrid>
              <SectionHead><ChevronDown size={11} strokeWidth={1.2} />Favorites</SectionHead>
              <EmptyNote>After you've favorited some files, we'll show them here.</EmptyNote>
              <SectionHead><ChevronDown size={11} strokeWidth={1.2} />Recent</SectionHead>
              <RecentList>
                {recent.map(([name, date, path, icon]) => (
                  <RecentRow key={name}>
                    {icon}
                    <RecentName>{name}</RecentName>
                    <RecentDate>{date}</RecentDate>
                    <RecentPath>{path}</RecentPath>
                  </RecentRow>
                ))}
              </RecentList>
            </Content>
            <Track $w={15} $thumb={126} />
            <Preview>Select a file to preview.</Preview>
          </Body>
          <StatusBar>
            49 items
            <ViewToggles>
              <svg width="13" height="12" viewBox="0 0 13 12" stroke="currentColor" strokeWidth="1.200">
                <path d="M0 1.500h13M0 4.500h13M0 7.500h13M0 10.500h13" />
              </svg>
              <svg width="12" height="12" viewBox="0 0 12 12" fill="none" stroke="currentColor">
                <path d="M.5.500h11v9H.5z" />
                <path d="M0 11.500h12" />
              </svg>
            </ViewToggles>
          </StatusBar>
        </Win>
      </WindowArea>
      <Taskbar>
        <Weather>
          <WeatherIcon />
          <div>85°F<small>Mostly cloudy</small></div>
        </Weather>
        <StartBtn><WinLogo /></StartBtn>
        <SearchPill><Search size={16} strokeWidth={1.8} />Search</SearchPill>
        <Apps>
          {taskApps.map(([key, running, active]) => (
            <AppSlot key={key} $running={running} $active={active}>{app[key]}</AppSlot>
          ))}
        </Apps>
        <Tray>
          <TraySlot $w={20}><ChevronUp size={16} strokeWidth={2} /></TraySlot>
          <TraySlot $w={40} $dim><Mic size={16} strokeWidth={1.3} /></TraySlot>
          <TraySlot $w={20}><Wifi size={17} strokeWidth={1.6} /></TraySlot>
          <TraySlot $w={20}><Volume1 size={16} strokeWidth={1.4} /></TraySlot>
          <TraySlot $w={30}>
            <svg width="16" height="12" viewBox="0 0 16 12" fill="none" stroke="currentColor">
              <rect x="0.500" y="2.500" width="13" height="8" rx="1.500" />
              <rect x="2" y="4" width="7" height="5" fill="currentColor" stroke="none" />
              <path d="M14.500 5v3" />
            </svg>
          </TraySlot>
          <Clock>4:50 PM<br />9/8/2023</Clock>
          <TraySlot $w={18}>
            <svg width="16" height="16" viewBox="0 0 16 16" fill="none" stroke="currentColor" strokeWidth="1.400">
              <path d="M3 11.500V7a5 5 0 0 1 10 0v4.500l1.500 1.500h-13zM6.500 15h3" />
            </svg>
          </TraySlot>
        </Tray>
      </Taskbar>
      <Highlight />
      <Pointer width="14" height="21" viewBox="0 0 14 21">
        <path d="M1 1v15l3.500-3.300 2.500 6 2.500-1-2.500-6H12z" fill="#fff" stroke="#111" strokeWidth="1" />
      </Pointer>
    </Desktop>
  );
}
